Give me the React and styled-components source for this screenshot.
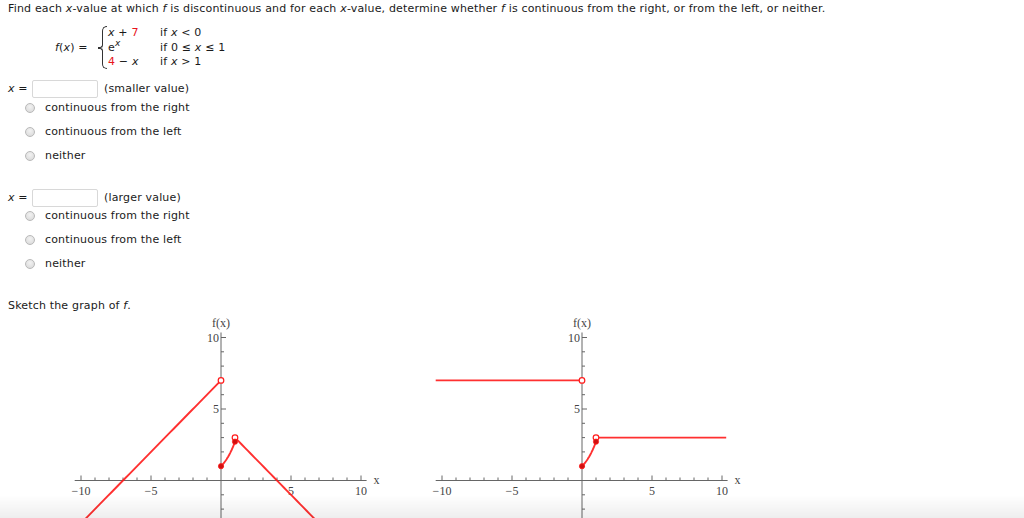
import React from 'react'
import styled, { createGlobalStyle } from 'styled-components'

const Global = createGlobalStyle`
  body {
    margin: 0;
    background: #fff;
    font-family: "DejaVu Sans", Verdana, sans-serif;
    font-size: 11px;
    letter-spacing: 0.17px;
    color: #1a1a1a;
  }
`

const Page = styled.div`
  padding: 2px 8px 0 8px;
  height: 516px;
  overflow: hidden;
`

const Line = styled.div`
  line-height: 14px;
  height: 14px;
  white-space: nowrap;
`

const I = styled.i`
  font-style: italic;
`

const Red = styled.span`
  color: #e8141c;
`

const Piecewise = styled.div`
  display: flex;
  align-items: center;
  margin: 10px 0 0 47px;
`

const FLabel = styled.div`
  width: 43px;
  line-height: 14px;
`

const Brace = styled.div`
  width: 9px;
  height: 43px;
  display: flex;
  flex-direction: column;
  margin-right: 1px;
`

const BracePart = styled.div`
  box-sizing: border-box;
  border-color: #333;
  border-style: solid;
  border-width: 0;
  ${p => p.$top && `
    height: 19px; margin-left: 4px; width: 5px;
    border-left-width: 1.3px; border-top-width: 1.3px;
    border-top-left-radius: 5px;
  `}
  ${p => p.$midUp && `
    height: 3px; width: 5.3px;
    border-right-width: 1.3px; border-bottom-width: 1.3px;
    border-bottom-right-radius: 4px;
  `}
  ${p => p.$midDown && `
    height: 3px; width: 5.3px;
    border-right-width: 1.3px; border-top-width: 1.3px;
    border-top-right-radius: 4px;
  `}
  ${p => p.$bottom && `
    height: 18px; margin-left: 4px; width: 5px;
    border-left-width: 1.3px; border-bottom-width: 1.3px;
    border-bottom-left-radius: 5px;
  `}
`

const Cases = styled.div`
  display: grid;
  grid-template-columns: 52px auto;
  line-height: 14.5px;
`

const Sup = styled.sup`
  font-size: 9px;
  vertical-align: 5px;
  line-height: 0;
`

const XRow = styled.div`
  display: flex;
  align-items: center;
  height: 18px;
  margin-top: ${p => p.$mt}px;
  white-space: nowrap;
`

const XLabel = styled.span`
  width: 24px;
`

const Box = styled.input`
  box-sizing: border-box;
  width: 66px;
  height: 18px;
  margin: 0 6px 0 0;
  border: 1px solid #d8d8d8;
  border-radius: 2px;
  background: #fff;
  outline: none;
`

const Options = styled.div`
  margin-top: ${p => p.$mt}px;
`

const Option = styled.label`
  display: flex;
  align-items: center;
  height: 24px;
  padding-left: 17px;
  white-space: nowrap;
`

const Radio = styled.input.attrs({ type: 'radio' })`
  appearance: none;
  box-sizing: border-box;
  width: 10px;
  height: 10px;
  margin: 0 10px 0 0;
  border-radius: 50%;
  border: 1px solid #b9b9b9;
  background: radial-gradient(circle at 50% 35%, #f2f2f2 0%, #dcdcdc 80%);
`

const Sketch = styled(Line)`
  margin-top: 23px;
`

const Graphs = styled.div`
  display: flex;
  gap: 1px;
  margin: -1px 0 0 32px;
  letter-spacing: 0;
`

const Fade = styled.div`
  position: fixed;
  left: 0;
  right: 0;
  bottom: 0;
  height: 23px;
  pointer-events: none;
  background: linear-gradient(rgba(0, 0, 0, 0), rgba(0, 0, 0, 0.065));
`

const W = 360
const H = 206
const OX = 181
const OY = 168.5
const SX = 14
const SY = 14.3
const X = u => OX + u * SX
const Y = v => OY - v * SY
const RED = '#ff1a1a'

const pts = (f, a, b, n = 20) => {
  const out = []
  for (let i = 0; i <= n; i++) {
    const u = a + ((b - a) * i) / n
    out.push(`${X(u).toFixed(2)},${Y(f(u)).toFixed(2)}`)
  }
  return out.join(' ')
}

const Graph = ({ left, right }) => {
  const xt = []
  for (let i = -10; i <= 10; i++) {
    if (i === 0) continue
    const h = i % 5 === 0 ? 5 : 3
    xt.push(<line key={'x' + i} x1={X(i)} x2={X(i)} y1={OY} y2={OY - h} />)
  }
  const yt = []
  for (let j = -3; j <= 10; j++) {
    if (j === 0) continue
    const h = j % 5 === 0 ? 5 : 3
    yt.push(<line key={'y' + j} x1={X(0)} x2={X(0) + h} y1={Y(j)} y2={Y(j)} />)
  }
  return (
    <svg width={W} height={H} viewBox={`0 0 ${W} ${H}`}>
      <g stroke="#666" strokeWidth="1">
        <line x1={X(-10.45)} x2={X(10.4)} y1={OY} y2={OY} />
        <line x1={X(0)} x2={X(0)} y1={Y(10.35)} y2={H} />
        {xt}
        {yt}
      </g>
      <g fontFamily='"Liberation Serif", "Times New Roman", serif' fontSize="12" fill="#444">
        <text x={X(0)} y={Y(10) - 11} textAnchor="middle">f(x)</text>
        <text x={X(0) - 2} y={Y(10) + 4} textAnchor="end">10</text>
        <text x={X(0) - 2} y={Y(5) + 4} textAnchor="end">5</text>
        <text x={X(-10)} y={OY + 14} textAnchor="middle">−10</text>
        <text x={X(-5)} y={OY + 14} textAnchor="middle">−5</text>
        <text x={X(5)} y={OY + 14} textAnchor="middle">5</text>
        <text x={X(10)} y={OY + 14} textAnchor="middle">10</text>
        <text x={X(10.4) + 7} y={OY + 3}>x</text>
      </g>
      <g stroke={RED} strokeWidth="1.9" fill="none" strokeOpacity="0.9">
        <polyline points={pts(left, -10.45, 0, 40)} />
        <polyline points={pts(Math.exp, 0, 1, 20)} />
        <polyline points={pts(right, 1, 10.3, 40)} />
      </g>
      <circle cx={X(0)} cy={Y(left(0))} r="2.8" fill="#fff" stroke={RED} strokeWidth="1.2" />
      <circle cx={X(1)} cy={Y(right(1))} r="2.8" fill="#fff" stroke={RED} strokeWidth="1.2" />
      <circle cx={X(0)} cy={Y(1)} r="2.6" fill="#d01010" stroke={RED} strokeWidth="0.8" />
      <circle cx={X(1)} cy={Y(Math.E)} r="2.6" fill="#d01010" stroke={RED} strokeWidth="0.8" />
    </svg>
  )
}

const Block = ({ mt, note, optMt }) => (
  <>
    <XRow $mt={mt}>
      <XLabel><I>x</I> =</XLabel>
      <Box />
      <span>{note}</span>
    </XRow>
    <Options $mt={optMt}>
      <Option><Radio name={note} />continuous from the right</Option>
      <Option><Radio name={note} />continuous from the left</Option>
      <Option><Radio name={note} />neither</Option>
    </Options>
  </>
)

export default function App() {
  return (
    <Page>
      <Global />
      <Line>
        Find each <I>x</I>-value at which <I>f</I> is discontinuous and for each <I>x</I>-value,
        determine whether <I>f</I> is continuous from the right, or from the left, or neither.
      </Line>
      <Piecewise>
        <FLabel><I>f</I>(<I>x</I>) =</FLabel>
        <Brace>
          <BracePart $top />
          <BracePart $midUp />
          <BracePart $midDown />
          <BracePart $bottom />
        </Brace>
        <Cases>
          <span><I>x</I> + <Red>7</Red></span>
          <span>if <I>x</I> &lt; 0</span>
          <span>e<Sup><I>x</I></Sup></span>
          <span>if 0 ≤ <I>x</I> ≤ 1</span>
          <span><Red>4</Red> − <I>x</I></span>
          <span>if <I>x</I> &gt; 1</span>
        </Cases>
      </Piecewise>
      <Block mt={10} optMt={-2} note="(smaller value)" />
      <Block mt={21} optMt={-3} note="(larger value)" />
      <Sketch>Sketch the graph of <I>f</I>.</Sketch>
      <Graphs>
        <Graph left={u => u + 7} right={u => 4 - u} />
        <Graph left={() => 7} right={() => 3} />
      </Graphs>
      <Fade />
    </Page>
  )
}
